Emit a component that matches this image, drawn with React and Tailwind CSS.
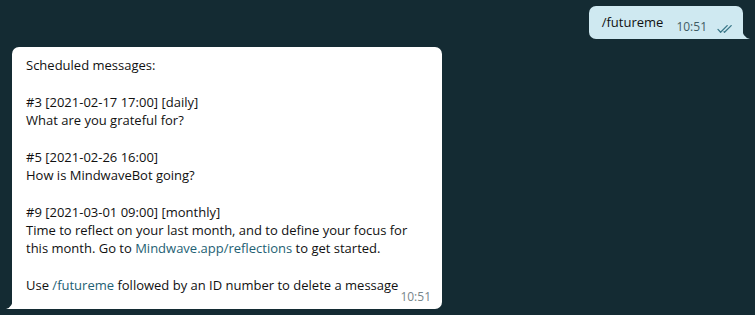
export default function App() {
  const blocks = [
    ["Scheduled messages:"],
    ["#3 [2021-02-17 17:00] [daily]", "What are you grateful for?"],
    ["#5 [2021-02-26 16:00]", "How is MindwaveBot going?"],
    [
      "#9 [2021-03-01 09:00] [monthly]",
      "Time to reflect on your last month, and to define your focus for",
      <>
        this month. Go to <span className="text-[#1e5f74]">Mindwave.app/reflections</span> to get started.
      </>,
    ],
    [
      <>
        Use <span className="text-[#1e5f74]">/futureme</span> followed by an ID number to delete a message
      </>,
    ],
  ];

  return (
    <div className="w-[755px] h-[315px] bg-[#142b33] pt-[6px] overflow-hidden font-['Open_Sans',sans-serif] text-[13px] text-[#111]">
      {/* Outgoing */}
      <div className="flex justify-end pr-[12px]">
        <div className="relative flex items-end bg-[#cfe9f1] rounded-[7px] rounded-br-none pl-[13px] pr-[8px] pt-[7px] pb-[8px]">
          <span className="leading-[18px]">/futureme</span>
          <span className="ml-[13px] text-[12px] leading-[14px] text-[#3f5c64] translate-y-[3px]">10:51</span>
          <svg className="ml-[10px] mb-[1px] translate-y-[3px]" width="18" height="8" viewBox="0 0 18 8" fill="none" stroke="#3a7788" strokeWidth="1.3" strokeLinecap="round" strokeLinejoin="round">
            <path d="M1 4.4 L3.6 7.2 L10.2 0.6" />
            <path d="M7 6.8 L7.5 7.2 L14.2 0.6" />
          </svg>
          <svg className="absolute right-[-7px] bottom-0" width="8" height="11" viewBox="0 0 8 11">
            <path d="M0 0 Q0 9 8 11 L0 11 Z" fill="#cfe9f1" />
          </svg>
        </div>
      </div>

      {/* Incoming */}
      <div className="mt-[8px] pl-[12px]">
        <div className="relative w-[430px] bg-white rounded-[7px] rounded-bl-none pt-[9px] px-[14px] pb-[5px]">
          <div className="flex flex-col gap-[18.33px]">
            {blocks.map((lines, i) => (
              <div key={i}>
                {lines.map((line, j) => (
                  <div key={j} className="leading-[18.33px] whitespace-nowrap">
                    {line}
                  </div>
                ))}
              </div>
            ))}
          </div>
          <div className="flex justify-end mt-[-4px] mr-[-3px] text-[12px] leading-[14px] text-[#77858a]">
            10:51
          </div>
          <svg className="absolute left-[-6px] bottom-0" width="7" height="11" viewBox="0 0 7 11">
            <path d="M7 0 Q7 9 0 11 L7 11 Z" fill="#ffffff" />
          </svg>
        </div>
      </div>
    </div>
  );
}
